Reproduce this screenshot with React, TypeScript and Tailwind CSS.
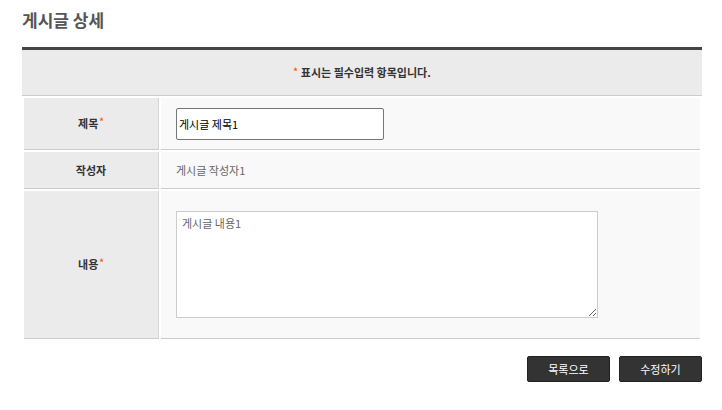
import React from "react";

const Req = () => (
  <span className="text-[#ff5a00] text-[9px] align-top ml-[1px]">*</span>
);

const rows = [
  { label: "제목", required: true },
  { label: "작성자", required: false },
  { label: "내용", required: true },
];

export default function App() {
  return (
    <div className="w-[722px] h-[410px] bg-white pl-[22px] font-['Noto_Sans_CJK_KR','Noto_Sans',sans-serif]">
      <h2 className="pt-[8px] h-[47px] text-[17px] font-bold text-[#555] leading-[24px]">
        게시글 상세
      </h2>

      <div className="w-[680px]">
        {/* notice */}
        <div className="h-[49px] border-t-[3px] border-b border-t-[#444] border-b-[#ccc] bg-[#ebebeb] flex items-center justify-center text-[11px] font-bold text-[#333]">
          <span className="text-[#ff5a00] text-[9px] mr-[3px] self-start mt-[15px]">*</span>
          표시는 필수입력 항목입니다.
        </div>

        <table className="w-[680px] border-separate border-spacing-[2px] text-[11px]">
          <tbody>
            {/* 제목 */}
            <tr>
              <th className="w-[135px] h-[52px] bg-[#ebebeb] border-b border-r border-[#ccc] border-r-[#d6d6d6] font-bold text-[#333]">
                {rows[0].label}
                <Req />
              </th>
              <td className="bg-[#f9f9f9] border-b border-[#ccc] pl-[15px]">
                <input
                  type="text"
                  defaultValue="게시글 제목1"
                  className="w-[208px] h-[32px] border border-[#767676] rounded-[2px] bg-white px-[2px] text-[11px] text-black outline-none"
                />
              </td>
            </tr>
            {/* 작성자 */}
            <tr>
              <th className="h-[37px] bg-[#ebebeb] border-b border-r border-[#ccc] border-r-[#d6d6d6] font-bold text-[#333]">
                {rows[1].label}
              </th>
              <td className="bg-[#f9f9f9] border-b border-[#ccc] pl-[15px] text-[#666]">
                게시글 작성자1
              </td>
            </tr>
            {/* 내용 */}
            <tr>
              <th className="h-[148px] bg-[#ebebeb] border-b border-r border-[#ccc] border-r-[#d6d6d6] font-bold text-[#333]">
                {rows[2].label}
                <Req />
              </th>
              <td className="bg-[#f9f9f9] border-b border-[#ccc] pl-[15px]">
                <textarea
                  defaultValue="게시글 내용1"
                  className="block w-[422px] h-[107px] border border-[#ccc] bg-white px-[5px] py-[3px] text-[11px] text-[#666] outline-none"
                />
              </td>
            </tr>
          </tbody>
        </table>

        <div className="flex justify-end gap-[9px] mt-[15px]">
          <button className="w-[83px] h-[26px] bg-[#333] border border-[#222] rounded-[2px] text-white text-[11px]">
            목록으로
          </button>
          <button className="w-[83px] h-[26px] bg-[#333] border border-[#222] rounded-[2px] text-white text-[11px]">
            수정하기
          </button>
        </div>
      </div>
    </div>
  );
}
